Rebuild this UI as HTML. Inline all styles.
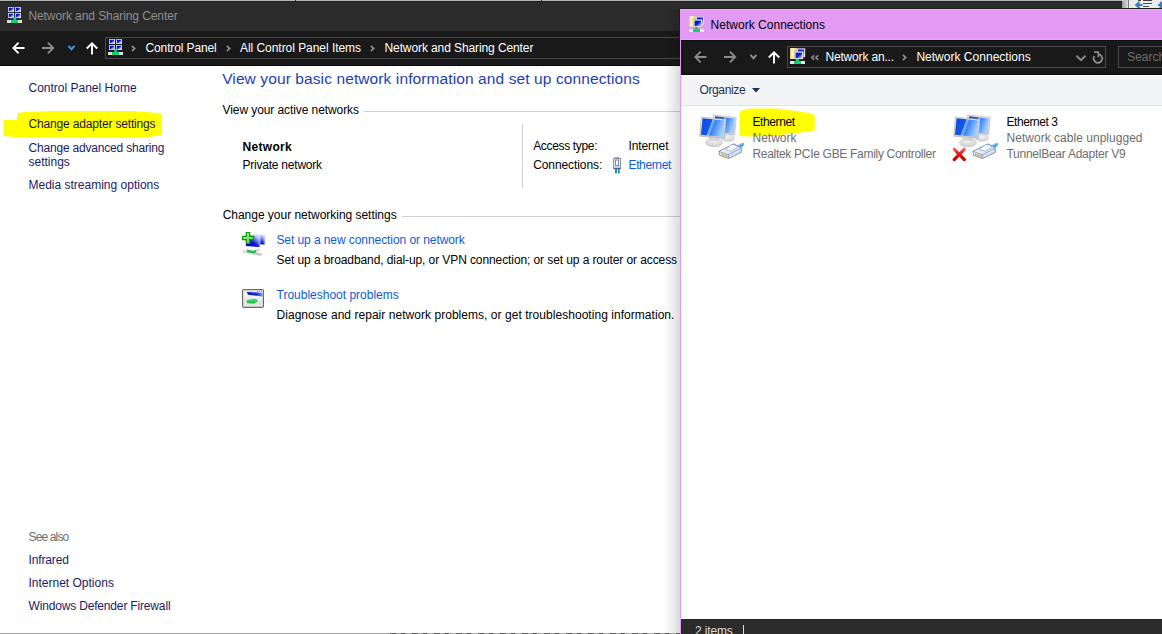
<!DOCTYPE html>
<html><head><meta charset="utf-8"><style>
html,body{margin:0;padding:0;width:1162px;height:634px;overflow:hidden;background:#fff;}
body{position:relative;font-family:"Liberation Sans",sans-serif;}
.t{position:absolute;white-space:nowrap;}
.r{position:absolute;}
.s{position:absolute;overflow:visible;}
</style></head><body>
<div class="r" style="left:0px;top:0px;width:1162px;height:1px;background:#b4b4b4;"></div>
<div class="r" style="left:295px;top:0px;width:1px;height:2px;background:#303030;"></div>
<div class="r" style="left:541px;top:0px;width:1px;height:2px;background:#303030;"></div>
<div class="r" style="left:0px;top:1px;width:1122px;height:30px;background:#2b2b2b;"></div>
<div class="r" style="left:0px;top:1px;width:1122px;height:1px;background:#222222;"></div>
<div class="r" style="left:0px;top:31px;width:1122px;height:34px;background:#191919;"></div>
<div class="r" style="left:0px;top:65px;width:1122px;height:1px;background:#0a0a0a;"></div>
<div class="r" style="left:0px;top:66px;width:1122px;height:567px;background:#ffffff;"></div>
<div class="r" style="left:0px;top:633px;width:1162px;height:1px;background:#a0a0a0;"></div>
<div class="r" style="left:390px;top:633px;width:290px;height:1px;background:repeating-linear-gradient(to right,#606060 0 6px,#a8a8a8 6px 11px,#505050 11px 15px,#b0b0b0 15px 22px);"></div>
<div class="r" style="left:1122px;top:1px;width:6px;height:8px;background:linear-gradient(to right,#9a9a9a,#dedede);"></div>
<div class="r" style="left:1122px;top:0px;width:40px;height:1px;background:#c8c8c8;"></div>
<div class="r" style="left:1128px;top:0px;width:1px;height:9px;background:#7a7a7a;"></div>
<div class="r" style="left:1129px;top:0px;width:33px;height:9px;background:#ebebeb;"></div>
<div class="r" style="left:1138px;top:0px;width:3px;height:1px;background:#404040;"></div>
<div class="r" style="left:1143px;top:0px;width:9px;height:1px;background:#404040;"></div>
<div class="r" style="left:1143px;top:3px;width:9px;height:1px;background:#505050;"></div>
<div class="r" style="left:1143px;top:6px;width:6px;height:1px;background:#505050;"></div>
<svg class="s" style="left:1135px;top:1px" width="8" height="8" viewBox="0 0 8 8"><path d="M7.5 4 H2 M4.5 1 L1.2 4 L4.5 7" stroke="#3a78c0" stroke-width="2" fill="none"/></svg>
<svg class="s" style="left:1158px;top:1px" width="5" height="8" viewBox="0 0 5 8"><path d="M0 4 H4 M2 1 L4.5 4 L2 7" stroke="#3a78c0" stroke-width="2" fill="none"/></svg>
<svg class="s" style="left:7px;top:7px" width="16" height="16" viewBox="0 0 16 16"><defs><linearGradient id="nsgt" x1="0" y1="0" x2="1" y2="1"><stop offset="0" stop-color="#0008c0"/><stop offset="0.45" stop-color="#0a18d0"/><stop offset="0.75" stop-color="#90a8f8"/><stop offset="1" stop-color="#e0e8ff"/></linearGradient></defs><rect x="1" y="0" width="6" height="5" fill="#dcd8cc"/><rect x="1.8" y="0.8" width="4.4" height="3.4" fill="url(#nsgt)"/><rect x="8" y="0" width="6" height="5" fill="#dcd8cc"/><rect x="8.8" y="0.8" width="4.4" height="3.4" fill="url(#nsgt)"/><rect x="1" y="6" width="6" height="5" fill="#dcd8cc"/><rect x="1.8" y="6.8" width="4.4" height="3.4" fill="url(#nsgt)"/><rect x="8" y="6" width="6" height="5" fill="#dcd8cc"/><rect x="8.8" y="6.8" width="4.4" height="3.4" fill="url(#nsgt)"/><rect x="6.3" y="10.5" width="2.6" height="3" fill="#18d070"/><rect x="0" y="13" width="15" height="3" fill="#dddddd"/><rect x="4" y="13" width="7" height="3" fill="#18d070"/></svg>
<div class="t" style="left:28.40px;top:10px;font-size:12px;line-height:12px;color:#8e8e8e;letter-spacing:-0.080px;">Network and Sharing Center</div>
<svg class="s" style="left:12px;top:42px" width="14" height="12" viewBox="0 0 14 12"><path d="M1.3 6 H12.5 M6.6 0.7 L1.3 6 L6.6 11.3" stroke="#ffffff" stroke-width="1.8" fill="none"/></svg>
<svg class="s" style="left:42px;top:42px" width="14" height="12" viewBox="0 0 14 12"><path d="M0 6 H11.2 M5.9 0.7 L11.2 6 L5.9 11.3" stroke="#8c8c8c" stroke-width="1.8" fill="none"/></svg>
<svg class="s" style="left:68px;top:45px" width="7" height="5" viewBox="0 0 7 5"><path d="M0.5 0.8 L3.5 4.2 L6.5 0.8" stroke="#3c96f0" stroke-width="1.9" fill="none"/></svg>
<svg class="s" style="left:86px;top:42px" width="12" height="14" viewBox="0 0 12 14"><path d="M6 12.5 V1.3 M0.8 6.5 L6 1.3 L11.2 6.5" stroke="#ffffff" stroke-width="1.9" fill="none"/></svg>
<div class="r" style="left:105px;top:37px;width:600px;height:22px;background:transparent;border:1px solid #4a4a4a;box-sizing:border-box;"></div>
<svg class="s" style="left:108px;top:39px" width="16" height="16" viewBox="0 0 16 16"><defs><linearGradient id="nsga" x1="0" y1="0" x2="1" y2="1"><stop offset="0" stop-color="#0008c0"/><stop offset="0.45" stop-color="#0a18d0"/><stop offset="0.75" stop-color="#90a8f8"/><stop offset="1" stop-color="#e0e8ff"/></linearGradient></defs><rect x="1" y="0" width="6" height="5" fill="#dcd8cc"/><rect x="1.8" y="0.8" width="4.4" height="3.4" fill="url(#nsga)"/><rect x="8" y="0" width="6" height="5" fill="#dcd8cc"/><rect x="8.8" y="0.8" width="4.4" height="3.4" fill="url(#nsga)"/><rect x="1" y="6" width="6" height="5" fill="#dcd8cc"/><rect x="1.8" y="6.8" width="4.4" height="3.4" fill="url(#nsga)"/><rect x="8" y="6" width="6" height="5" fill="#dcd8cc"/><rect x="8.8" y="6.8" width="4.4" height="3.4" fill="url(#nsga)"/><rect x="6.3" y="10.5" width="2.6" height="3" fill="#18d070"/><rect x="0" y="13" width="15" height="3" fill="#dddddd"/><rect x="4" y="13" width="7" height="3" fill="#18d070"/></svg>
<svg class="s" style="left:131px;top:45px" width="5" height="7" viewBox="0 0 5 7"><path d="M0.9 0.9 L3.7 3.5 L0.9 6.1" stroke="#8a8a8a" stroke-width="1.75" fill="none"/></svg>
<div class="t" style="left:145.50px;top:42px;font-size:12px;line-height:12px;color:#ffffff;letter-spacing:-0.125px;">Control Panel</div>
<svg class="s" style="left:226px;top:45px" width="5" height="7" viewBox="0 0 5 7"><path d="M0.9 0.9 L3.7 3.5 L0.9 6.1" stroke="#8a8a8a" stroke-width="1.75" fill="none"/></svg>
<div class="t" style="left:240.00px;top:42px;font-size:12px;line-height:12px;color:#ffffff;letter-spacing:-0.045px;">All Control Panel Items</div>
<svg class="s" style="left:370px;top:45px" width="5" height="7" viewBox="0 0 5 7"><path d="M0.9 0.9 L3.7 3.5 L0.9 6.1" stroke="#8a8a8a" stroke-width="1.75" fill="none"/></svg>
<div class="t" style="left:384.50px;top:42px;font-size:12px;line-height:12px;color:#ffffff;letter-spacing:-0.100px;">Network and Sharing Center</div>
<div class="t" style="left:28.50px;top:82px;font-size:12px;line-height:12px;color:#1a1a66;">Control Panel Home</div>
<svg class="s" style="left:0px;top:0px" width="170" height="140" viewBox="0 0 170 140"><path d="M4 120 L17 120 L17 113.4 L18 113 L25 112 L54 111 L131 111 L145 112 L159 113 L162 115 L162 135 L160.5 135.5 L152 136.6 L140 137.8 L54 137.8 L14 137 L4 136Z" fill="#ffff00"/></svg>
<div class="t" style="left:28.50px;top:118px;font-size:12px;line-height:12px;color:#1a1a30;letter-spacing:-0.168px;">Change adapter settings</div>
<div class="t" style="left:28.50px;top:142px;font-size:12px;line-height:12px;color:#1a1a66;letter-spacing:-0.195px;">Change advanced sharing</div>
<div class="t" style="left:28.50px;top:156px;font-size:12px;line-height:12px;color:#1a1a66;">settings</div>
<div class="t" style="left:28.50px;top:179px;font-size:12px;line-height:12px;color:#1a1a66;">Media streaming options</div>
<div class="t" style="left:28.50px;top:531px;font-size:12px;line-height:12px;color:#6d6d6d;letter-spacing:-0.857px;">See also</div>
<div class="t" style="left:28.50px;top:554px;font-size:12px;line-height:12px;color:#1a1a66;letter-spacing:-0.143px;">Infrared</div>
<div class="t" style="left:28.50px;top:577px;font-size:12px;line-height:12px;color:#1a1a66;">Internet Options</div>
<div class="t" style="left:28.50px;top:600px;font-size:12px;line-height:12px;color:#1a1a66;letter-spacing:-0.167px;">Windows Defender Firewall</div>
<div class="t" style="left:222.20px;top:71px;font-size:15.5px;line-height:15.5px;color:#1c3eb4;letter-spacing:0.105px;">View your basic network information and set up connections</div>
<div class="t" style="left:222.50px;top:104px;font-size:12px;line-height:12px;color:#000;letter-spacing:-0.083px;">View your active networks</div>
<div class="r" style="left:364px;top:111px;width:320px;height:1px;background:#d0d0d0;"></div>
<div class="t" style="left:242.40px;top:141px;font-size:12px;line-height:12px;color:#000;font-weight:bold;letter-spacing:0.333px;">Network</div>
<div class="t" style="left:242.40px;top:159px;font-size:12px;line-height:12px;color:#000;letter-spacing:-0.214px;">Private network</div>
<div class="r" style="left:522px;top:124px;width:1px;height:64px;background:#d0d0d0;"></div>
<div class="t" style="left:533.20px;top:140px;font-size:12px;line-height:12px;color:#000;letter-spacing:-0.336px;">Access type:</div>
<div class="t" style="left:628.50px;top:140px;font-size:12px;line-height:12px;color:#000;letter-spacing:-0.100px;">Internet</div>
<div class="t" style="left:533.20px;top:159px;font-size:12px;line-height:12px;color:#000;letter-spacing:-0.091px;">Connections:</div>
<svg class="s" style="left:612px;top:157px" width="10" height="17" viewBox="0 0 10 17"><rect x="3.5" y="0.6" width="3.2" height="1.6" fill="#f4f6fa" stroke="#8088a0" stroke-width="0.8"/><rect x="1.6" y="1.6" width="7" height="10" fill="#e8eef6" stroke="#7a8298" stroke-width="0.9"/><rect x="3.6" y="3" width="3" height="5.6" fill="#f6f8fc" stroke="#6a7288" stroke-width="0.8"/><rect x="2.2" y="9.5" width="5.8" height="1.6" fill="#a8d0f0"/><rect x="1.6" y="11.2" width="7" height="0.9" fill="#505868"/><rect x="3" y="12" width="2" height="4.4" fill="#1890d0"/><rect x="5.8" y="12" width="2" height="4.4" fill="#1890d0"/></svg>
<div class="t" style="left:628.50px;top:159px;font-size:12px;line-height:12px;color:#0b5cd6;letter-spacing:-0.371px;">Ethernet</div>
<div class="t" style="left:222.70px;top:209px;font-size:12px;line-height:12px;color:#000;letter-spacing:-0.027px;">Change your networking settings</div>
<div class="r" style="left:402px;top:216px;width:280px;height:1px;background:#d0d0d0;"></div>
<svg class="s" style="left:238px;top:228px" width="32" height="32" viewBox="0 0 32 32"><defs><linearGradient id="scr2" x1="0" y1="1" x2="1" y2="0"><stop offset="0" stop-color="#0000b0"/><stop offset="0.45" stop-color="#0818d0"/><stop offset="0.8" stop-color="#b0c0ff"/><stop offset="1" stop-color="#e0e8ff"/></linearGradient>
<linearGradient id="pl" x1="0" y1="0" x2="1" y2="1"><stop offset="0" stop-color="#a8f090"/><stop offset="1" stop-color="#60d050"/></linearGradient>
<linearGradient id="cab" x1="0" y1="0" x2="0" y2="1"><stop offset="0" stop-color="#f0f0f0"/><stop offset="1" stop-color="#b8b8b8"/></linearGradient></defs><path d="M15 6 L27.5 6.8 L27.3 17.4 L15.5 16.8Z" fill="#e4e4ec"/><path d="M16 7 L26.8 7.6 L26.6 16.6 L16.3 16Z" fill="url(#scr2)"/><path d="M7.5 6.5 L22.5 7.2 L22.2 19.8 L7.2 18.6Z" fill="#e8e8ee"/><path d="M8.2 7.2 L21.8 7.9 L21.6 19.1 L8 18Z" fill="url(#scr2)"/><path d="M8.3 4.5 H11.7 V8.3 H15.5 V11.7 H11.7 V15.5 H8.3 V11.7 H4.5 V8.3 H8.3Z" fill="url(#pl)" stroke="#0a9a0a" stroke-width="1.2"/><path d="M5 22.5 Q4 24 5.5 24.5 L22 27.5 Q24 27.6 23.5 25.8 L21 25 L6 22Z" fill="url(#cab)" stroke="#c0c0c0" stroke-width="0.4"/><path d="M9 21.6 L16 23 L18 21.5 L18.2 24.2 L16 25.2 L9 24.2Z" fill="#10c050"/><path d="M18 21.5 L21 21 L21.5 22.8 L18.2 24Z" fill="#d0d0d0"/></svg>
<div class="t" style="left:276.40px;top:234px;font-size:12px;line-height:12px;color:#0b5cd6;letter-spacing:-0.073px;">Set up a new connection or network</div>
<div class="t" style="left:276.50px;top:254px;font-size:12px;line-height:12px;color:#000;letter-spacing:-0.093px;">Set up a broadband, dial-up, or VPN connection; or set up a router or access</div>
<svg class="s" style="left:242px;top:289px" width="22" height="19" viewBox="0 0 22 19"><defs><linearGradient id="tb" x1="0" y1="0" x2="1" y2="0"><stop offset="0" stop-color="#0010a8"/><stop offset="0.6" stop-color="#1830d0"/><stop offset="1" stop-color="#7090ff"/></linearGradient>
<linearGradient id="tg" x1="0" y1="0" x2="0" y2="1"><stop offset="0" stop-color="#50f070"/><stop offset="1" stop-color="#10b040"/></linearGradient>
<linearGradient id="tw" x1="0" y1="0" x2="0" y2="1"><stop offset="0" stop-color="#fafafa"/><stop offset="1" stop-color="#e4e4e4"/></linearGradient></defs><rect x="0.6" y="0.6" width="20.8" height="17.8" rx="1.2" fill="url(#tw)" stroke="#6c6c6c" stroke-width="1.2"/><rect x="1.3" y="1.3" width="19.4" height="1.4" fill="#d4d4d4"/><circle cx="15.5" cy="2" r="0.5" fill="#707070"/><circle cx="17.5" cy="2" r="0.5" fill="#707070"/><circle cx="19.5" cy="2" r="0.5" fill="#707070"/><path d="M4.8 3 L20.5 3.8 L20.4 7.4 L6 5.8Z" fill="url(#tb)"/><path d="M1.2 10.5 L6 10.2 L20.5 12.5 L20.5 16.5 L14 15 L1.2 13.2Z" fill="#dedede"/><path d="M4.8 11 L12.5 9.6 L15.2 10.2 L15.4 12.8 L12 14.6 L5 14.2Z" fill="url(#tg)"/></svg>
<div class="t" style="left:276.50px;top:289px;font-size:12px;line-height:12px;color:#0b5cd6;">Troubleshoot problems</div>
<div class="t" style="left:276.50px;top:309px;font-size:12px;line-height:12px;color:#000;letter-spacing:0.042px;">Diagnose and repair network problems, or get troubleshooting information.</div>
<div class="r" style="left:664px;top:9px;width:16px;height:625px;background:linear-gradient(to right, rgba(0,0,0,0), rgba(0,0,0,0.055) 45%, rgba(0,0,0,0.14));"></div>
<div class="r" style="left:680px;top:9px;width:482px;height:625px;background:#e29af4;"></div>
<div class="r" style="left:679px;top:8px;width:483px;height:1px;background:#1e201e;"></div>
<div class="r" style="left:679px;top:8px;width:1px;height:32px;background:#1e201e;"></div>
<div class="r" style="left:680px;top:9px;width:482px;height:1px;background:#eeaaff;"></div>
<div class="r" style="left:681px;top:39px;width:481px;height:1px;background:#f0a4ff;"></div>
<div class="r" style="left:681px;top:40px;width:481px;height:1px;background:#0c100c;"></div>
<div class="r" style="left:681px;top:41px;width:481px;height:33px;background:#191919;"></div>
<div class="r" style="left:681px;top:74px;width:481px;height:1px;background:#0a0a0a;"></div>
<div class="r" style="left:681px;top:75px;width:481px;height:1px;background:#ffffff;"></div>
<div class="r" style="left:681px;top:76px;width:481px;height:29px;background:#f3f4f6;"></div>
<div class="r" style="left:681px;top:105px;width:481px;height:1px;background:#e2e2e2;"></div>
<div class="r" style="left:681px;top:106px;width:481px;height:513px;background:#ffffff;"></div>
<div class="r" style="left:681px;top:619px;width:481px;height:15px;background:#2b2b2b;"></div>
<svg class="s" style="left:686px;top:13px" width="22" height="22" viewBox="0 0 22 22"><defs><linearGradient id="fot" x1="0" y1="0" x2="1" y2="0"><stop offset="0" stop-color="#e8c860"/><stop offset="0.3" stop-color="#fff8c8"/><stop offset="1" stop-color="#e0c070"/></linearGradient>
<linearGradient id="nst" x1="0" y1="0" x2="1" y2="1"><stop offset="0" stop-color="#0010c0"/><stop offset="0.5" stop-color="#1020c8"/><stop offset="1" stop-color="#d0e0ff"/></linearGradient></defs><rect x="3" y="3" width="7.5" height="11" fill="url(#fot)"/><rect x="10" y="3.5" width="8" height="8.5" fill="#e8e8ee" stroke="#b8b0c8" stroke-width="0.5"/><rect x="11" y="4.5" width="6" height="6.5" fill="url(#nst)"/><rect x="7.5" y="6.5" width="8.5" height="7.5" fill="#f0f0e8" stroke="#a8a898" stroke-width="0.5"/><rect x="8.6" y="7.6" width="6.4" height="5.4" fill="url(#nst)"/><rect x="9" y="14" width="3" height="2.2" fill="#10d070"/><rect x="3" y="16" width="15" height="3" fill="#e4ece4"/><rect x="7" y="16" width="7" height="3" fill="#10d070"/></svg>
<div class="t" style="left:710.60px;top:19px;font-size:12px;line-height:12px;color:#000;letter-spacing:0.017px;">Network Connections</div>
<svg class="s" style="left:694px;top:51px" width="14" height="12" viewBox="0 0 14 12"><path d="M1.3 6 H12.5 M6.6 0.7 L1.3 6 L6.6 11.3" stroke="#8c8c8c" stroke-width="1.8" fill="none"/></svg>
<svg class="s" style="left:724px;top:51px" width="14" height="12" viewBox="0 0 14 12"><path d="M0 6 H11.2 M5.9 0.7 L11.2 6 L5.9 11.3" stroke="#8c8c8c" stroke-width="1.8" fill="none"/></svg>
<svg class="s" style="left:750px;top:54px" width="7" height="5" viewBox="0 0 7 5"><path d="M0.5 0.8 L3.5 4.2 L6.5 0.8" stroke="#8c8c8c" stroke-width="1.9" fill="none"/></svg>
<svg class="s" style="left:768px;top:50.5px" width="12" height="14" viewBox="0 0 12 14"><path d="M6 12.5 V1.3 M0.8 6.5 L6 1.3 L11.2 6.5" stroke="#ffffff" stroke-width="1.9" fill="none"/></svg>
<div class="r" style="left:787px;top:46px;width:319px;height:22px;background:transparent;border:1px solid #4a4a4a;box-sizing:border-box;"></div>
<svg class="s" style="left:787px;top:45px" width="22" height="22" viewBox="0 0 22 22"><defs><linearGradient id="foa" x1="0" y1="0" x2="1" y2="0"><stop offset="0" stop-color="#e8c860"/><stop offset="0.3" stop-color="#fff8c8"/><stop offset="1" stop-color="#e0c070"/></linearGradient>
<linearGradient id="nsa" x1="0" y1="0" x2="1" y2="1"><stop offset="0" stop-color="#0010c0"/><stop offset="0.5" stop-color="#1020c8"/><stop offset="1" stop-color="#d0e0ff"/></linearGradient></defs><rect x="3" y="3" width="7.5" height="11" fill="url(#foa)"/><rect x="10" y="3.5" width="8" height="8.5" fill="#e8e8ee" stroke="#b8b0c8" stroke-width="0.5"/><rect x="11" y="4.5" width="6" height="6.5" fill="url(#nsa)"/><rect x="7.5" y="6.5" width="8.5" height="7.5" fill="#f0f0e8" stroke="#a8a898" stroke-width="0.5"/><rect x="8.6" y="7.6" width="6.4" height="5.4" fill="url(#nsa)"/><rect x="9" y="14" width="3" height="2.2" fill="#10d070"/><rect x="3" y="16" width="15" height="3" fill="#e4ece4"/><rect x="7" y="16" width="7" height="3" fill="#10d070"/></svg>
<svg class="s" style="left:810px;top:54px" width="10" height="7" viewBox="0 0 10 7"><path d="M4.2 1.4 L1.8 3.6 L4.2 5.8 M8.2 1.4 L5.8 3.6 L8.2 5.8" stroke="#8a8a8a" stroke-width="1.6" fill="none"/></svg>
<div class="t" style="left:825.40px;top:51px;font-size:12px;line-height:12px;color:#ffffff;letter-spacing:-0.167px;">Network an...</div>
<svg class="s" style="left:902px;top:54px" width="5" height="7" viewBox="0 0 5 7"><path d="M0.9 0.9 L3.7 3.5 L0.9 6.1" stroke="#8a8a8a" stroke-width="1.75" fill="none"/></svg>
<div class="t" style="left:916.40px;top:51px;font-size:12px;line-height:12px;color:#ffffff;letter-spacing:0.017px;">Network Connections</div>
<svg class="s" style="left:1076px;top:55px" width="10" height="6" viewBox="0 0 10 6"><path d="M0.5 0.8 L5.0 5.2 L9.5 0.8" stroke="#8a8a8a" stroke-width="1.9" fill="none"/></svg>
<div class="r" style="left:1088px;top:47px;width:1px;height:20px;background:#141414;"></div>
<svg class="s" style="left:1092px;top:51px" width="12" height="13" viewBox="0 0 12 13"><path d="M6.3 3.2 A4.3 4.3 0 1 1 2.4 5" stroke="#8a8a8a" stroke-width="1.8" fill="none"/><path d="M2 1.2 H6.4 V6.2" stroke="#8a8a8a" stroke-width="1.7" fill="none"/></svg>
<div class="r" style="left:1118px;top:46px;width:60px;height:22px;background:transparent;border:1px solid #4a4a4a;box-sizing:border-box;"></div>
<div class="t" style="left:1127.20px;top:51px;font-size:12px;line-height:12px;color:#6d6d6d;">Search</div>
<div class="t" style="left:699.40px;top:84px;font-size:12px;line-height:12px;color:#1e3158;letter-spacing:-0.343px;">Organize</div>
<svg class="s" style="left:752px;top:88px" width="8" height="5" viewBox="0 0 8 5"><path d="M0 0 H8 L4 4.5Z" fill="#1e3158"/></svg>
<svg class="s" style="left:735px;top:104px" width="82" height="36" viewBox="0 0 82 36"><path d="M5.0 6.9 L9.1 5.9 L15.4 4.4 L41.0 4.4 L48.3 5.5 L63.6 7.3 L73.9 9.1 L79.7 11.0 L79.7 26.3 L75.0 27.4 L60.7 28.9 L46.8 30.7 L36.6 32.2 L14.6 32.6 L6.6 32.2 L5.0 31.5Z" fill="#ffff00"/></svg>
<svg class="s" style="left:696px;top:110px" width="52" height="52" viewBox="0 0 52 52"><defs>
<linearGradient id="scra" x1="0" y1="0" x2="1" y2="0.3"><stop offset="0" stop-color="#0a44dc"/><stop offset="0.46" stop-color="#1658ee"/><stop offset="0.48" stop-color="#88bcff"/><stop offset="0.62" stop-color="#3a84f6"/><stop offset="1" stop-color="#a0ccff"/></linearGradient>
<linearGradient id="frma" x1="0" y1="0" x2="0" y2="1"><stop offset="0" stop-color="#eeece4"/><stop offset="1" stop-color="#d0cec4"/></linearGradient>
<radialGradient id="stda" cx="0.5" cy="0.35" r="0.65"><stop offset="0" stop-color="#f2f2f2"/><stop offset="0.8" stop-color="#d4d4d4"/><stop offset="1" stop-color="#b8b8b8"/></radialGradient>
<linearGradient id="plga" x1="0" y1="0" x2="1" y2="1"><stop offset="0" stop-color="#f8fbff"/><stop offset="1" stop-color="#c8d8ec"/></linearGradient>
</defs><ellipse cx="32" cy="28" rx="7" ry="3.5" fill="url(#stda)"/><path d="M17.6 4.9 L40.2 7.4 L38.6 24.8 L17 23Z" fill="url(#frma)" stroke="#b4b2a8" stroke-width="0.6"/><path d="M19 6.3 L38.9 8.5 L37.5 23.4 L18.5 21.8Z" fill="url(#scra)"/><ellipse cx="18" cy="32.5" rx="9" ry="4.6" fill="url(#stda)"/><path d="M12 27 L24 28 L22 31 L14 30.5Z" fill="#d4d4d4"/><path d="M5.3 7 L30 9.4 L28.3 28.3 L3.7 26.2Z" fill="url(#frma)" stroke="#aeaca2" stroke-width="0.6"/><path d="M6.6 8.2 L28.6 10.6 L27.1 26.9 L5 24.8Z" fill="url(#scra)"/><path d="M39 36.5 L45.5 33.2 L48 33 L47.6 35.8 L41.5 39.5Z" fill="#3aa4e4"/><path d="M41 35.5 L46.5 33.2 L47.6 33.3 L42 36.3Z" fill="#a8dcff"/><path d="M22.9 41.3 L38 33.8 L45.3 37.8 L45.3 42.4 L32.4 48.5 L23.7 45.4Z" fill="url(#plga)" stroke="#5a6e98" stroke-width="0.7"/><path d="M22.9 41.3 L32.6 44.8 L45.3 37.8 M32.6 44.8 L32.4 48.5" stroke="#6a80a8" stroke-width="0.6" fill="none"/><path d="M29.5 39.6 L35.4 34.4 L39.2 35 L41.5 37.2 L35.5 41.2Z" fill="#f4f8ff" stroke="#7088b0" stroke-width="0.5"/><path d="M25 43 L31.5 45.3 L31.3 47.5 L25 45.3Z" fill="#c8b448"/><path d="M26.6 43.5 V45.8 M28.2 44.1 V46.4 M29.8 44.7 V47" stroke="#f0f0e0" stroke-width="0.5"/></svg>
<div class="t" style="left:752.50px;top:116px;font-size:12px;line-height:12px;color:#000;letter-spacing:-0.400px;">Ethernet</div>
<div class="t" style="left:752.50px;top:132px;font-size:12px;line-height:12px;color:#6d6d6d;">Network</div>
<div class="t" style="left:752.50px;top:148px;font-size:12px;line-height:12px;color:#6d6d6d;letter-spacing:-0.303px;">Realtek PCIe GBE Family Controller</div>
<svg class="s" style="left:950px;top:110px" width="52" height="52" viewBox="0 0 52 52"><defs>
<linearGradient id="scrb" x1="0" y1="0" x2="1" y2="0.3"><stop offset="0" stop-color="#0a44dc"/><stop offset="0.46" stop-color="#1658ee"/><stop offset="0.48" stop-color="#88bcff"/><stop offset="0.62" stop-color="#3a84f6"/><stop offset="1" stop-color="#a0ccff"/></linearGradient>
<linearGradient id="frmb" x1="0" y1="0" x2="0" y2="1"><stop offset="0" stop-color="#eeece4"/><stop offset="1" stop-color="#d0cec4"/></linearGradient>
<radialGradient id="stdb" cx="0.5" cy="0.35" r="0.65"><stop offset="0" stop-color="#f2f2f2"/><stop offset="0.8" stop-color="#d4d4d4"/><stop offset="1" stop-color="#b8b8b8"/></radialGradient>
<linearGradient id="plgb" x1="0" y1="0" x2="1" y2="1"><stop offset="0" stop-color="#f8fbff"/><stop offset="1" stop-color="#c8d8ec"/></linearGradient>
</defs><ellipse cx="32" cy="28" rx="7" ry="3.5" fill="url(#stdb)"/><path d="M17.6 4.9 L40.2 7.4 L38.6 24.8 L17 23Z" fill="url(#frmb)" stroke="#b4b2a8" stroke-width="0.6"/><path d="M19 6.3 L38.9 8.5 L37.5 23.4 L18.5 21.8Z" fill="url(#scrb)"/><ellipse cx="18" cy="32.5" rx="9" ry="4.6" fill="url(#stdb)"/><path d="M12 27 L24 28 L22 31 L14 30.5Z" fill="#d4d4d4"/><path d="M5.3 7 L30 9.4 L28.3 28.3 L3.7 26.2Z" fill="url(#frmb)" stroke="#aeaca2" stroke-width="0.6"/><path d="M6.6 8.2 L28.6 10.6 L27.1 26.9 L5 24.8Z" fill="url(#scrb)"/><path d="M39 36.5 L45.5 33.2 L48 33 L47.6 35.8 L41.5 39.5Z" fill="#3aa4e4"/><path d="M41 35.5 L46.5 33.2 L47.6 33.3 L42 36.3Z" fill="#a8dcff"/><path d="M22.9 41.3 L38 33.8 L45.3 37.8 L45.3 42.4 L32.4 48.5 L23.7 45.4Z" fill="url(#plgb)" stroke="#5a6e98" stroke-width="0.7"/><path d="M22.9 41.3 L32.6 44.8 L45.3 37.8 M32.6 44.8 L32.4 48.5" stroke="#6a80a8" stroke-width="0.6" fill="none"/><path d="M29.5 39.6 L35.4 34.4 L39.2 35 L41.5 37.2 L35.5 41.2Z" fill="#f4f8ff" stroke="#7088b0" stroke-width="0.5"/><path d="M25 43 L31.5 45.3 L31.3 47.5 L25 45.3Z" fill="#c8b448"/><path d="M26.6 43.5 V45.8 M28.2 44.1 V46.4 M29.8 44.7 V47" stroke="#f0f0e0" stroke-width="0.5"/></svg>
<svg class="s" style="left:952px;top:147px" width="15" height="15" viewBox="0 0 15 15"><defs><linearGradient id="rxg" x1="0" y1="0" x2="0" y2="1"><stop offset="0" stop-color="#f07070"/><stop offset="0.45" stop-color="#e81010"/><stop offset="1" stop-color="#d00000"/></linearGradient></defs><path d="M2.2 2.2 L12.4 12.6 M12.4 2.2 L2.2 12.6" stroke="url(#rxg)" stroke-width="3.2" stroke-linecap="round"/><path d="M2.2 2.2 L7.3 7.4 L12.4 2.2" stroke="#d81010" stroke-width="0.7" fill="none" stroke-opacity="0.6"/></svg>
<div class="t" style="left:1006.50px;top:116px;font-size:12px;line-height:12px;color:#000;letter-spacing:-0.444px;">Ethernet 3</div>
<div class="t" style="left:1006.50px;top:132px;font-size:12px;line-height:12px;color:#6d6d6d;letter-spacing:0.027px;">Network cable unplugged</div>
<div class="t" style="left:1006.50px;top:148px;font-size:12px;line-height:12px;color:#6d6d6d;letter-spacing:-0.260px;">TunnelBear Adapter V9</div>
<div class="t" style="left:695.10px;top:625px;font-size:12px;line-height:12px;color:#dddddd;letter-spacing:-0.167px;">2 items</div>
<div class="r" style="left:743px;top:625px;width:1px;height:9px;background:#dddddd;"></div>
</body></html>
